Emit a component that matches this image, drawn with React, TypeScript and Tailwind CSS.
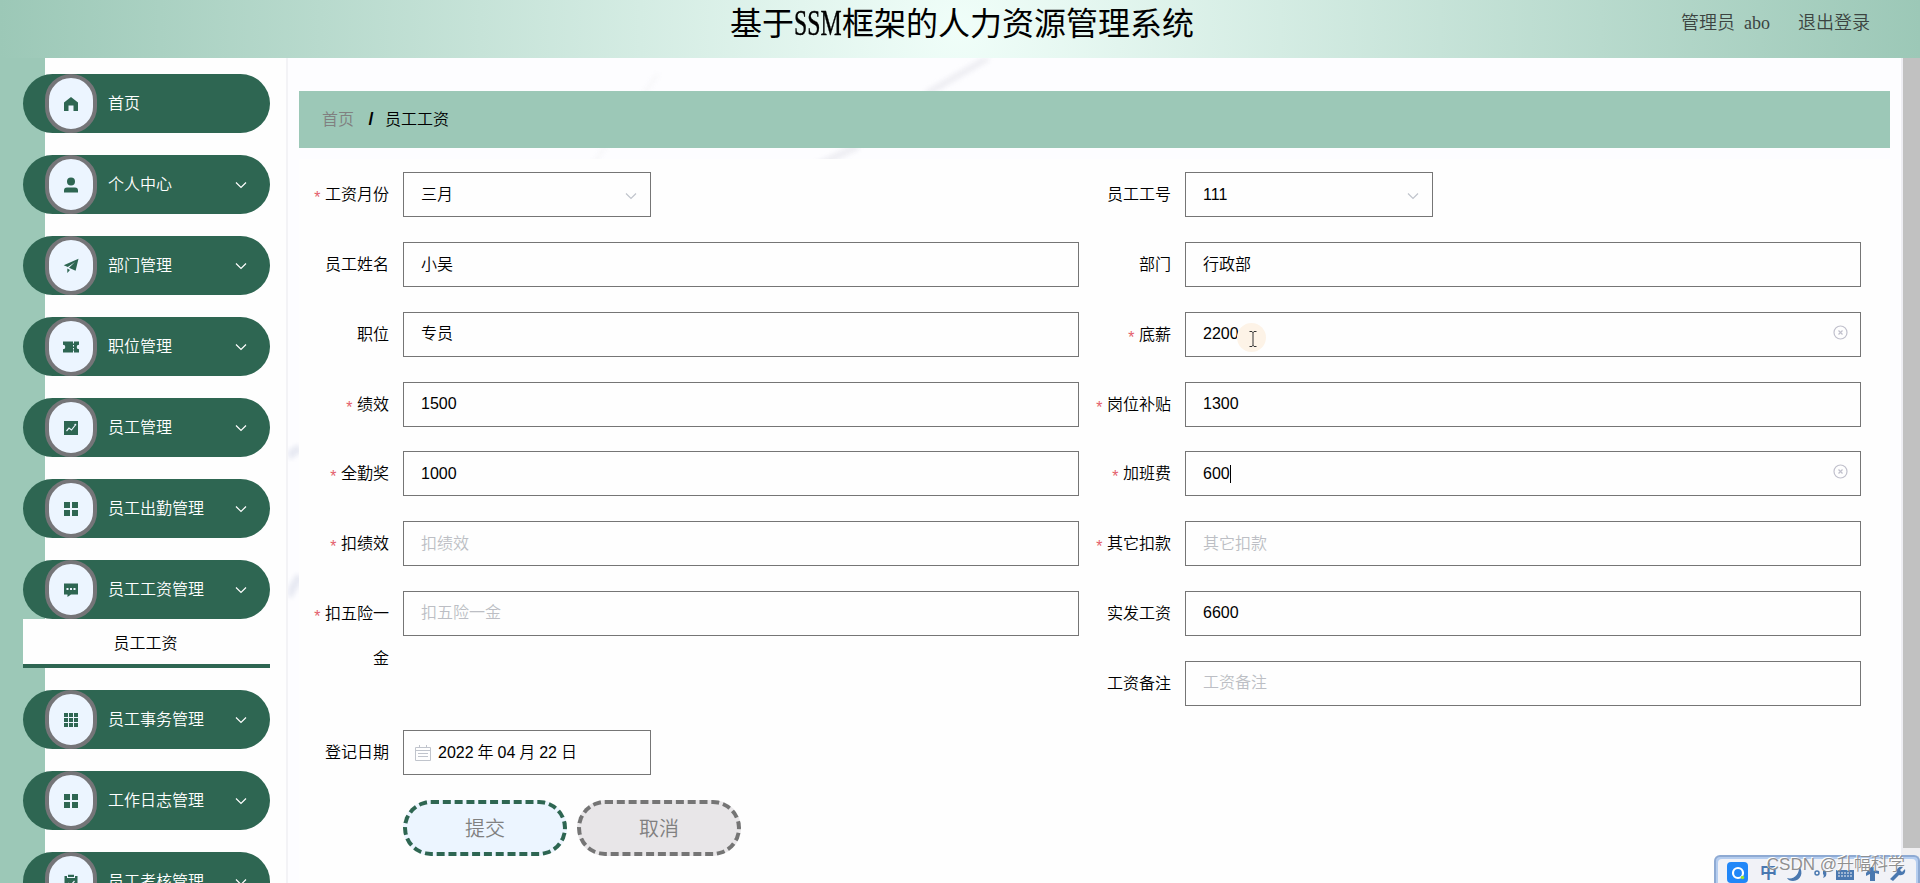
import { ReactNode } from "react";

type MenuItem = {
  label: string;
  icon: ReactNode;
  arrow: boolean;
  children?: string[];
};

type FieldProps = {
  label: string;
  value?: string;
  required?: boolean;
  type?: "input" | "select" | "date";
  clearable?: boolean;
  focused?: boolean;
  className?: string;
};

const gridIcon = (
  <path d="M1 1h6v6H1zM9 1h6v6H9zM1 9h6v6H1zM9 9h6v6H9z" />
);

const menu: MenuItem[] = [
  {
    label: "首页",
    icon: <path d="M8 1 1 6.5V15h4.5V9.5h5V15H15V6.5z" />,
    arrow: false,
  },
  {
    label: "个人中心",
    icon: (
      <>
        <circle cx="8" cy="4.5" r="4" />
        <path d="M1 15.500v-2a3 3 0 0 1 3-3h8a3 3 0 0 1 3 3v2z" />
      </>
    ),
    arrow: true,
  },
  {
    label: "部门管理",
    icon: <path d="M15.500.8 .7 7.200 4.800 9 12 4 6 9.800l6.600 3zM4.300 10.500v4.500l2.700-2.900z" />,
    arrow: true,
  },
  {
    label: "职位管理",
    icon: (
      <path d="M0 2.500h10v2h1v-2h5v3.200a2.300 2.300 0 0 0 0 4.600v3.200h-5v-2h-1v2H0v-3.200a2.300 2.300 0 0 0 0-4.600zM10 6v1.500h1V6zM10 9v1.500h1V9z" />
    ),
    arrow: true,
  },
  {
    label: "员工管理",
    icon: (
      <>
        <path d="M1 1h14v14H1z" />
        <path
          d="m3.500 11 2.500-3 2.500 2 3.500-4.500"
          fill="none"
          stroke="#ecf5ff"
          strokeWidth="1.200"
        />
        <circle cx="12.300" cy="4.700" r="1" fill="#ecf5ff" />
      </>
    ),
    arrow: true,
  },
  { label: "员工出勤管理", icon: gridIcon, arrow: true },
  {
    label: "员工工资管理",
    icon: (
      <>
        <path d="M1 1.500h14v11H8L4.500 15v-2.500H1z" />
        <path d="M3.500 6h2v2h-2zM7 6h2v2H7zM10.500 6h2v2h-2z" fill="#ecf5ff" />
      </>
    ),
    arrow: true,
    children: ["员工工资"],
  },
  {
    label: "员工事务管理",
    icon: (
      <path d="M1 1h4v4H1zM6 1h4v4H6zM11 1h4v4h-4zM1 6h4v4H1zM6 6h4v4H6zM11 6h4v4h-4zM1 11h4v4H1zM6 11h4v4H6zM11 11h4v4h-4z" />
    ),
    arrow: true,
  },
  { label: "工作日志管理", icon: gridIcon, arrow: true },
  {
    label: "员工考核管理",
    icon: (
      <>
        <path d="M1.500 2H4v2h8V2h2.500v13.500h-13zM5 .8h6V3H5z" />
        <path d="m5 9 2.500 2.500L11.500 7" fill="none" stroke="#ecf5ff" strokeWidth="1.200" />
      </>
    ),
    arrow: true,
  },
];

function Chevron({ className }: { className: string }) {
  return (
    <svg className={className} viewBox="0 0 12 8" fill="none" stroke="currentColor" strokeWidth="1.200">
      <path d="m1 1.500 5 5 5-5" />
    </svg>
  );
}

function Header() {
  return (
    <header className="relative flex h-[58px] shrink-0 items-start justify-center bg-[radial-gradient(circle_at_center,#f0fef9_0%,#9cc8b7_100%)] font-['Liberation_Serif','Noto_Sans_CJK_SC',serif]">
      <h1 className="flex pt-[3px] pl-1 text-[32px] leading-[42px] font-normal text-black">
        基于
        <span className="w-12">
          <span className="inline-block origin-left scale-x-[.68] text-[35px] [-webkit-text-stroke:.4px_#000]">
            SSM
          </span>
        </span>
        框架的人力资源管理系统
      </h1>
      <div className="absolute top-0 right-[50px] flex gap-[27px] text-[18px] leading-[46px] text-[#3c4441]">
        <span className="flex gap-[9px]">
          <span>管理员</span>
          <span className="w-[27px]">abo</span>
        </span>
        <span>退出登录</span>
      </div>
    </header>
  );
}

function Sidebar() {
  return (
    <aside className="h-full w-[288px] shrink-0 overflow-hidden border-r-2 border-[#f3f3f6] bg-[linear-gradient(to_right,#9cc8b7_45px,#fefefe_45px)] pt-4 pl-[23px]">
      {menu.map((item) => (
        <div key={item.label} className="mb-[22px] w-[247px]">
          <div className="flex h-[59px] items-center rounded-[30px] bg-[#2e6652] pr-[23px] pl-[22px] text-white">
            <span className="mr-[11px] flex h-[59px] w-[52px] items-center justify-center rounded-[26px] border-4 border-[#757578] bg-[#ecf5ff]">
              <svg className="h-4 w-4 fill-[#2e6652]" viewBox="0 0 16 16">
                {item.icon}
              </svg>
            </span>
            <span className="flex-1 text-base">{item.label}</span>
            {item.arrow && <Chevron className="h-2 w-3 text-white" />}
          </div>
          {item.children?.map((child) => (
            <div
              key={child}
              className="flex h-[49px] items-center justify-center border-b-4 border-[#2e6652] bg-[#fefefe] pt-[4px] pr-[2px] text-base text-black"
            >
              {child}
            </div>
          ))}
        </div>
      ))}
    </aside>
  );
}

function Field({
  label,
  value,
  required,
  type = "input",
  clearable,
  focused,
  className = "",
}: FieldProps) {
  return (
    <div className={`flex items-start ${className}`}>
      <label className="w-[104px] pr-[14px] text-right text-base leading-[45px] text-black">
        {required && (
          <span className="mr-[3px] align-[-3px] font-['Liberation_Mono',monospace] leading-none text-[#e4606d]">
            *
          </span>
        )}
        {label}
      </label>
      <div
        className={`flex h-[45px] items-center border border-[#757575] bg-[#fefefe] text-base text-black ${
          type === "input" ? "w-[676px] px-[17px]" : "w-[247.500px]"
        } ${type === "select" ? "pr-[13px] pl-[17px]" : ""} ${
          type === "date" ? "pl-[11px] [word-spacing:-.5px]" : ""
        }`}
      >
        {type === "date" && (
          <svg
            className="mr-[7px] h-4 w-4 text-[#c0c4cc]"
            viewBox="0 0 16 16"
            fill="none"
            stroke="currentColor"
          >
            <path d="M.5 2.500h15v13H.5zM.5 5.500h15M4.500 0v3M11.500 0v3M3 8.500h10M3 11.500h10" />
          </svg>
        )}
        {value ? (
          <span>{value}</span>
        ) : (
          <span className="text-[#bcbec4]">{label}</span>
        )}
        {focused && <span className="h-[18px] w-px bg-black" />}
        {type === "select" && <Chevron className="mt-[3px] ml-auto h-2 w-3 text-[#c0c4cc]" />}
        {clearable && (
          <svg
            className="mt-[-4px] mr-[-5px] ml-auto h-[15px] w-[15px] text-[#c0c0cc]"
            viewBox="0 0 15 15"
            fill="none"
            stroke="currentColor"
            strokeWidth="1.200"
          >
            <circle cx="7.500" cy="7.500" r="6.500" />
            <path d="m5.500 5.500 4 4m0-4-4 4" />
          </svg>
        )}
      </div>
    </div>
  );
}

function SalaryForm() {
  return (
    <form className="relative h-[724px] bg-[#fefefe] pt-[13.400px]">
      <div className="grid auto-rows-[69.750px] grid-cols-[782px_782px]">
        <Field label="工资月份" value="三月" type="select" required />
        <Field label="员工工号" value="111" type="select" />
        <Field label="员工姓名" value="小吴" />
        <Field label="部门" value="行政部" />
        <Field label="职位" value="专员" />
        <Field label="底薪" value="2200" required clearable />
        <Field label="绩效" value="1500" required />
        <Field label="岗位补贴" value="1300" required />
        <Field label="全勤奖" value="1000" required />
        <Field label="加班费" value="600" required clearable focused />
        <Field label="扣绩效" required />
        <Field label="其它扣款" required />
        <Field label="扣五险一金" required />
        <Field label="实发工资" value="6600" />
        <Field label="工资备注" className="col-start-2" />
        <Field label="登记日期" value="2022 年 04 月 22 日" type="date" className="col-start-1" />
      </div>
      <div className="flex gap-[10px] pl-[104px] font-['Liberation_Serif','Noto_Sans_CJK_SC',serif] text-[20px] text-[#808080]">
        <button
          type="button"
          className="h-14 w-[164px] rounded-[28px] border-4 border-dashed border-[#2e6652] bg-[#ecf5ff] pt-px"
        >
          提交
        </button>
        <button
          type="button"
          className="h-14 w-[164px] rounded-[28px] border-4 border-dashed border-[#757575] bg-[#e8e6e8] pt-px"
        >
          取消
        </button>
      </div>
      {/* mouse pointer over the base salary input */}
      <span className="absolute top-[164px] left-[938px] flex h-[29px] w-[29px] items-center justify-center rounded-full bg-[#fdf3e7] pt-[2px] pl-[2px]">
        <svg className="h-4 w-2 text-[#333]" viewBox="0 0 8 16" fill="none" stroke="currentColor">
          <path d="M.5.5H3l1 1 1-1h2.500M4 1v14M.5 15.500H3l1-1 1 1h2.500" />
        </svg>
      </span>
    </form>
  );
}

function ImeBar() {
  return (
    <div className="absolute right-0 bottom-0 h-7 w-[206px] overflow-hidden rounded-t-md border-x-2 border-t-2 border-[#8eaad3] bg-[#b5cdef] px-[2px] pt-[2px]">
      <div className="flex h-8 items-start rounded-t bg-[#f1f2f7] pt-[3px] pl-[9px] text-[#4a78b0]">
        <span className="mr-3 flex h-[21px] w-[21px] items-center justify-center rounded bg-[#2187f8]">
          <svg className="h-4 w-4" viewBox="0 0 16 16" fill="none">
            <circle cx="8" cy="8" r="5" stroke="#fff" strokeWidth="2.200" />
            <circle cx="12.500" cy="12.500" r="1.800" fill="#9be22d" />
          </svg>
        </span>
        <span className="mr-[10px] text-[17px] leading-[21px] font-bold">中</span>
        <svg className="mt-1 h-4 w-[122px]" viewBox="0 0 122 16" fill="currentColor">
          <path d="M12 0c5 6 2 15-6 15-3 0-5-1-6-3 7 2 13-4 12-12z" />
          <circle cx="30" cy="7" r="2" fill="none" stroke="currentColor" strokeWidth="1.500" />
          <path d="M36 5h3c1 4 0 6-3 7 1-2 1-3 0-4z" />
          <path d="M49 4h18v10H49z" />
          <path d="M51 7h14M51 10h14" stroke="#f1f2f7" strokeDasharray="2 1" />
          <path d="M84 1h3v3l5 1v3l-4-1v8h-5V8l-4 2V7z" />
          <path d="m103 13 7-7c-1-4 3-6 6-5l-3 3 2 2 3-3c1 4-2 7-6 6l-6 6z" />
        </svg>
      </div>
    </div>
  );
}

export default function App() {
  return (
    <div className="relative flex h-[883px] w-[1920px] flex-col overflow-hidden bg-[#fefefe] font-['Liberation_Sans','Noto_Sans_CJK_SC',sans-serif] font-[350]">
      <Header />
      <div className="flex h-[825px]">
        <Sidebar />
        <main className="relative flex-1 overflow-hidden bg-[#fdfdff] pt-[33px] pr-[11px] pl-[11px]">
          {/* marble streaks of the page background */}
          <svg className="absolute inset-0 h-full w-full blur-[2px]" fill="none" stroke="#efeff4">
            <path d="m700 0-62 36" strokeWidth="7" />
            <path d="m570 88-50 24" strokeWidth="8" />
            <path d="m370 16-65 90" strokeWidth="4" stroke="#f8f8fa" />
            <path d="m0 398 12-8M0 538l12-20" strokeWidth="9" stroke="#e8eaf3" />
          </svg>
          <nav className="relative flex h-[57px] items-center bg-[#9cc8b7] pl-[23px] text-base">
            <span className="text-[#808080]">首页</span>
            <span className="mr-[10px] ml-[13px] w-2 text-center text-[18px] font-bold text-black">
              /
            </span>
            <span className="text-black">员工工资</span>
          </nav>
          <div className="relative pt-[11px]">
            <SalaryForm />
          </div>
        </main>
        <div className="w-[19px] border-l-2 border-[#eeeef3] bg-[#f0eff1]">
          <div className="h-[790px] bg-[#c1c1c1]" />
        </div>
      </div>
      <ImeBar />
      <span className="absolute right-[15px] bottom-[5px] text-[17px] leading-[26px] text-[#8f8f8f] [text-shadow:-1px_-1px_0_#fff]">
        CSDN @升幅科学
      </span>
    </div>
  );
}
